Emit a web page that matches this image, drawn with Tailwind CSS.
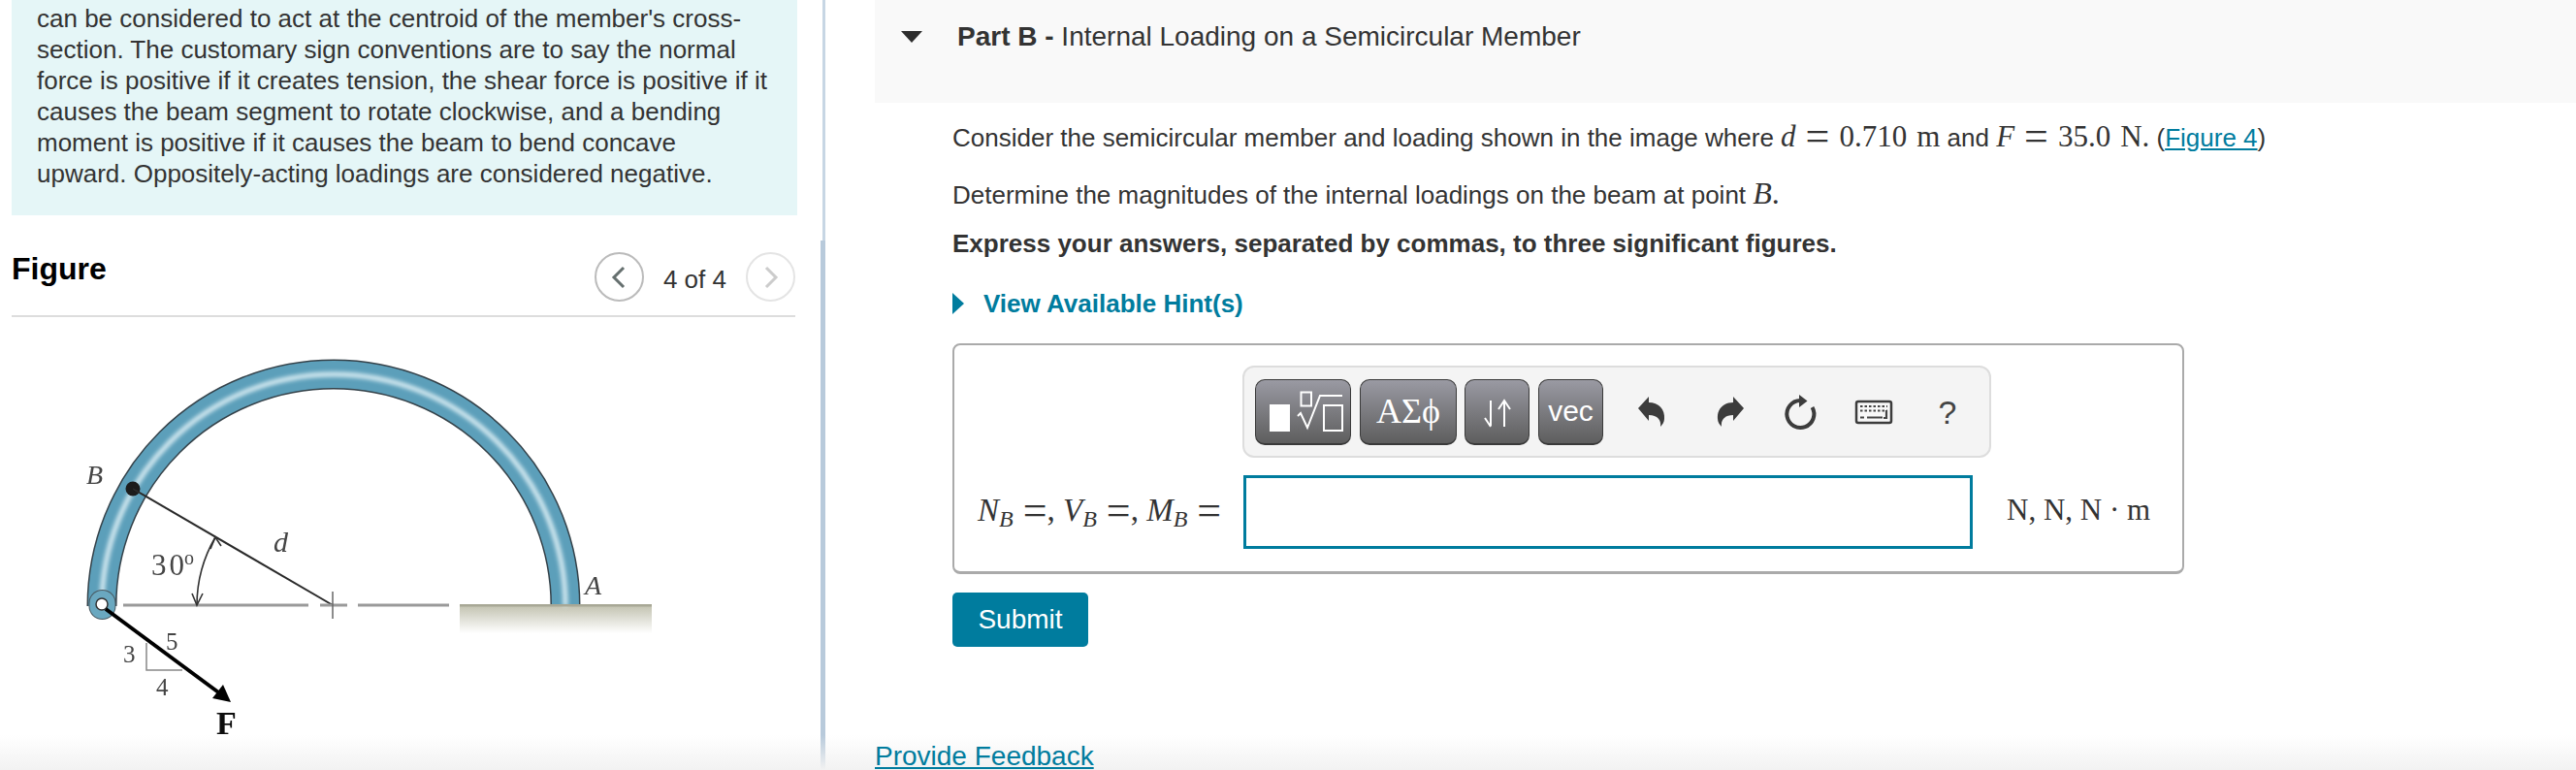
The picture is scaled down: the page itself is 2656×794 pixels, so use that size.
<!DOCTYPE html>
<html lang="en">
<head>
    <meta charset="UTF-8">
    <title>Part B - Internal Loading on a Semicircular Member</title>
    <script src="https://cdn.jsdelivr.net/npm/@tailwindcss/browser@4"></script>
</head>
<body class="bg-white">
<div class="relative flex w-[2656px] h-[794px] overflow-hidden bg-white text-[#333] font-['Liberation_Sans',Arial,sans-serif]">

    <!-- Left column -->
    <div class="w-[846px] shrink-0">
        <div class="ml-[12px] w-[810px] bg-[#e5f6f7] pt-[3px] pb-[27px] pl-[26px] text-[26px] leading-[32px] whitespace-nowrap">
            can be considered to act at the centroid of the member's cross-<br>
            section. The customary sign conventions are to say the normal<br>
            force is positive if it creates tension, the shear force is positive if it<br>
            causes the beam segment to rotate clockwise, and a bending<br>
            moment is positive if it causes the beam to bend concave<br>
            upward. Oppositely-acting loadings are considered negative.
        </div>

        <div class="ml-[12px] w-[808px] h-[105px] border-b-2 border-[#ddd] flex items-end justify-between pb-[14px]">
            <h2 class="text-[32px] leading-[40px] font-bold text-black mb-[14px]">Figure</h2>
            <div class="flex items-center">
                <div class="w-[51px] h-[51px] rounded-full border-2 border-[#bbb] flex items-center justify-center">
                    <svg width="16" height="24" viewBox="0 0 16 24" fill="none" stroke="#66706f" stroke-width="3"><path d="M13 2 L3 12 L13 22"/></svg>
                </div>
                <span class="ml-[20px] mr-[20px] text-[26px] leading-[32px] mt-[5px]">4 of 4</span>
                <div class="w-[51px] h-[51px] rounded-full border-2 border-[#e4e4e4] flex items-center justify-center">
                    <svg width="16" height="24" viewBox="0 0 16 24" fill="none" stroke="#ccc" stroke-width="3"><path d="M3 2 L13 12 L3 22"/></svg>
                </div>
            </div>
        </div>

        <!-- Figure image -->
        <svg width="846" height="467" viewBox="0 327 846 467" class="block" fill="none">
            <defs>
                <linearGradient id="ground" x1="0" y1="0" x2="0" y2="1">
                    <stop offset="0" stop-color="#c2c2b0"/>
                    <stop offset="1" stop-color="#ffffff"/>
                </linearGradient>
                <filter id="soft"><feGaussianBlur stdDeviation="0.6"/></filter>
                <filter id="glow"><feGaussianBlur stdDeviation="2.2"/></filter>
            </defs>
            <rect x="474" y="624" width="198" height="29" fill="url(#ground)"/>
            <g filter="url(#soft)">
                <path d="M105 625 A239 239 0 0 1 583 625" stroke="#35424a" stroke-width="31"/>
                <path d="M105 625 A239 239 0 0 1 583 625" stroke="#5c9fba" stroke-width="28"/>
                <path d="M105 625 A239 239 0 0 1 583 625" stroke="#d8ecf3" stroke-width="5" filter="url(#glow)"/>
                <path d="M105.5 622 L105.5 625" stroke="#4a5a62" stroke-width="28" stroke-linecap="round"/>
                <path d="M105.5 622 L105.5 625" stroke="#6aa8c0" stroke-width="26" stroke-linecap="round"/>
                <rect x="474" y="623" width="198" height="2.5" fill="#a8a896"/>
                <circle cx="105" cy="623" r="6" fill="#fff" stroke="#333" stroke-width="1.5"/>
                <circle cx="137" cy="504" r="7.5" fill="#1a1a1a"/>
                <path d="M137 504 L343 624" stroke="#2b2b2b" stroke-width="2"/>
                <path d="M127 624 H318 M330 624 H358 M369 624 H463" stroke="#9a9a9a" stroke-width="3"/>
                <path d="M343 610 V638" stroke="#666" stroke-width="1.5"/>
                <path d="M203 624 A140 140 0 0 1 222 554" stroke="#333" stroke-width="1.6"/>
                <path d="M198 612 L203 624 L209 612 M217 566 L222 554 L228 563" stroke="#333" stroke-width="1.6"/>
                <path d="M151 663 V691 H188" stroke="#888" stroke-width="1.5"/>
                <path d="M109 628 L228 716" stroke="#000" stroke-width="4"/>
                <path d="M238 724 L219 720 L230 706 Z" fill="#000"/>
            </g>
            <g fill="#444" font-family="'Liberation Serif',serif" filter="url(#soft)">
                <text x="89" y="499" font-size="28" font-style="italic">B</text>
                <text x="282" y="569" font-size="30" font-style="italic">d</text>
                <text x="603" y="613" font-size="28" font-style="italic">A</text>
                <text x="156" y="593" font-size="31" textLength="34">30</text>
                <text x="190" y="582" font-size="20">o</text>
                <text x="127" y="683" font-size="25">3</text>
                <text x="171" y="670" font-size="25">5</text>
                <text x="161" y="717" font-size="25">4</text>
                <text x="223" y="757" font-size="34" font-weight="bold" fill="#111">F</text>
            </g>
        </svg>
    </div>

    <!-- Divider -->
    <div class="w-[5px] shrink-0 flex flex-col items-end">
        <div class="w-[3px] h-[248px] bg-[#c7d6e4]"></div>
        <div class="w-[5px] flex-1 bg-[#b8cadb]"></div>
    </div>

    <!-- Right column -->
    <div class="flex-1 min-w-0">
        <div class="ml-[51px] h-[106px] bg-[#f9f9f9] flex items-start pt-[22px] pl-[27px]">
            <svg width="22" height="12" viewBox="0 0 22 12" class="mt-[10px]"><path d="M0 0 H22 L11 12 Z" fill="#2d2d2d"/></svg>
            <h3 class="ml-[36px] text-[28px] leading-[32px]"><b>Part B -</b> Internal Loading on a Semicircular Member</h3>
        </div>

        <div class="ml-[131px]">
            <p class="mt-[18px] h-[34px] text-[26px] leading-[34px] whitespace-nowrap">Consider the semicircular member and loading shown in the image where <span class="font-['Liberation_Serif',serif] text-[31px]"><i>d</i><span class="mx-[10px] text-[44px] leading-[0] align-[-4px]">=</span>0.710<span class="ml-[10px]">m</span></span> and <span class="font-['Liberation_Serif',serif] text-[31px]"><i>F</i><span class="mx-[10px] text-[44px] leading-[0] align-[-4px]">=</span>35.0<span class="ml-[10px]">N.</span></span> (<a class="text-[#007c9e] underline">Figure 4</a>)</p>
            <p class="mt-[24px] h-[34px] text-[26px] leading-[34px]">Determine the magnitudes of the internal loadings on the beam at point <span class="font-['Liberation_Serif',serif] text-[32px]"><i>B</i>.</span></p>
            <p class="mt-[18px] h-[34px] text-[26px] leading-[34px] font-bold">Express your answers, separated by commas, to three significant figures.</p>
            <div class="mt-[28px] h-[34px] flex items-center text-[26px] leading-[34px] font-bold text-[#007c9e]">
                <svg width="12" height="22" viewBox="0 0 12 22"><path d="M0 0 L12 11 L0 22 Z" fill="#007c9e"/></svg>
                <span class="ml-[20px]">View Available Hint(s)</span>
            </div>

            <!-- Answer box -->
            <div class="mt-[24px] w-[1270px] h-[238px] border-2 border-b-[3px] border-[#aaa] rounded-[8px]">
                <div class="ml-[297px] mt-[21px] w-[772px] h-[95px] border-2 border-[#ddd] rounded-[12px] bg-[#f4f4f4] flex items-center pl-[11px]">
                    <div class="w-[99px] h-[68px] rounded-[10px] border border-b-2 border-[#3a3a3a] bg-gradient-to-b from-[#9a9aa3] to-[#5e5e5e]">
                        <svg width="97" height="66" viewBox="1295 391 97 66" fill="none" stroke="#fff" stroke-width="2">
                            <rect x="1309" y="416" width="21" height="28" fill="#fff" stroke="none"/>
                            <rect x="1341.5" y="403.5" width="10.5" height="14"/>
                            <path d="M1338 428 L1341 425 L1348 440 L1361 407 H1384"/>
                            <rect x="1365" y="417" width="19" height="26"/>
                        </svg>
                    </div>
                    <div class="ml-[9px] w-[100px] h-[68px] rounded-[10px] border border-b-2 border-[#3a3a3a] bg-gradient-to-b from-[#9a9aa3] to-[#5e5e5e] flex items-center justify-center text-white font-['Liberation_Serif',serif] text-[36px]">ΑΣϕ</div>
                    <div class="ml-[8px] w-[67px] h-[68px] rounded-[10px] border border-b-2 border-[#3a3a3a] bg-gradient-to-b from-[#9a9aa3] to-[#5e5e5e]">
                        <svg width="65" height="66" viewBox="1511 391 65 66" fill="none" stroke="#fff" stroke-width="2">
                            <path d="M1537 412 V438 M1531 430 L1537 439"/>
                            <path d="M1551 413 V439 M1545 421 L1551 412 L1557 421"/>
                        </svg>
                    </div>
                    <div class="ml-[9px] w-[67px] h-[68px] rounded-[10px] border border-b-2 border-[#3a3a3a] bg-gradient-to-b from-[#9a9aa3] to-[#5e5e5e] flex items-center justify-center text-white text-[30px] pb-[2px]">vec</div>

                    <svg width="40" height="44" viewBox="1685 402 40 44" class="ml-[32px]"><path d="M1689 420 L1700 408 V414 C1710 414 1717 421 1716 431 C1716 434 1714 437 1712 439 C1713 432 1709 427 1700 427 V433 Z" fill="#3c3c3c"/></svg>
                    <svg width="40" height="44" viewBox="1685 402 40 44" class="ml-[37px] -scale-x-100"><path d="M1689 420 L1700 408 V414 C1710 414 1717 421 1716 431 C1716 434 1714 437 1712 439 C1713 432 1709 427 1700 427 V433 Z" fill="#3c3c3c"/></svg>
                    <svg width="40" height="44" viewBox="1836 402 40 44" class="ml-[34px]" fill="none">
                        <path d="M1868.5 419 A14 14 0 1 1 1856 412" stroke="#3c3c3c" stroke-width="4"/>
                        <path d="M1855 406 L1863.5 412.5 L1855 419 Z" fill="#3c3c3c"/>
                    </svg>
                    <svg width="42" height="28" viewBox="1911 415 42 28" class="ml-[35px]" fill="none">
                        <rect x="1914" y="418" width="36" height="22" rx="2" stroke="#3c3c3c" stroke-width="2.5" fill="#f8f8f8"/>
                        <path d="M1918 423 H1946 M1918 427.5 H1946" stroke="#444" stroke-width="2.2" stroke-dasharray="2.5 2"/>
                        <path d="M1918 434.5 H1922 M1925 434.5 H1941" stroke="#444" stroke-width="2.2"/>
                        <path d="M1945 427 V435 H1942" stroke="#444" stroke-width="2.2"/>
                    </svg>
                    <span class="ml-[40px] w-[30px] text-center text-[34px] leading-[40px] text-[#444]">?</span>
                </div>

                <div class="mt-[18px] flex items-center">
                    <div class="ml-[24px] w-[274px] font-['Liberation_Serif',serif] text-[33px] leading-[40px] whitespace-nowrap pb-[5px]"><i>N<sub class="text-[24px]">B</sub></i><span class="ml-[10px] text-[44px] leading-[0] align-[-4px]">=</span>, <i>V<sub class="text-[24px]">B</sub></i><span class="ml-[10px] text-[44px] leading-[0] align-[-4px]">=</span>, <i>M<sub class="text-[24px]">B</sub></i><span class="ml-[10px] text-[44px] leading-[0] align-[-4px]">=</span></div>
                    <div class="w-[752px] h-[76px] border-[3px] border-[#007c9e] bg-white"></div>
                    <div class="ml-[35px] font-['Liberation_Serif',serif] text-[31px] leading-[40px] whitespace-nowrap pb-[5px]">N, N, N · m</div>
                </div>
            </div>

            <button class="mt-[19px] block w-[140px] h-[56px] bg-[#007c9e] rounded-[5px] text-white text-[28px]">Submit</button>
        </div>

        <a class="relative z-10 block ml-[51px] mt-[97px] text-[28px] leading-[32px] text-[#007c9e] underline">Provide Feedback</a>
    </div>

    <div class="absolute left-0 right-0 bottom-0 h-[36px] bg-gradient-to-b from-transparent to-[#f2f2f2] pointer-events-none"></div>
</div>
</body>
</html>
